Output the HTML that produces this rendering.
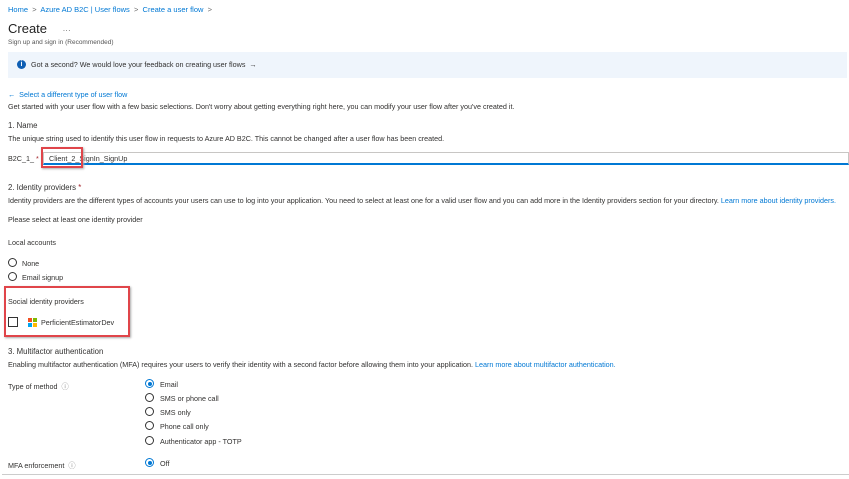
<!DOCTYPE html><html><head><style>
body{margin:0;width:849px;height:479px;overflow:hidden;background:#fff;font-family:"Liberation Sans",sans-serif;color:#323130;position:relative}
.t{position:absolute;font-size:7.2px;white-space:nowrap;line-height:9px}
.l{color:#0078d4}
.r{position:absolute;width:9px;height:9px;border:1px solid #333;border-radius:50%;box-sizing:border-box}
.rs{border-color:#0078d4}.rs:after{content:"";position:absolute;left:1.5px;top:1.5px;width:4px;height:4px;border-radius:50%;background:#0078d4}
.box{position:absolute;border:2px solid #e0454a;box-sizing:border-box;box-shadow:1px 1px 2px #aaa}
</style></head><body>
<div class="t l" style="left:8px;top:5px;font-size:7.5px">Home &nbsp;<span style="color:#666">&gt;</span>&nbsp; Azure AD B2C | User flows &nbsp;<span style="color:#666">&gt;</span>&nbsp; Create a user flow &nbsp;<span style="color:#666">&gt;</span></div>
<div class="t" style="left:8px;top:21px;font-size:13px;line-height:15px;color:#222">Create <span style="font-size:8px;color:#666;margin-left:12px">···</span></div>
<div class="t" style="left:8px;top:38px;font-size:6.5px;color:#555">Sign up and sign in (Recommended)</div>
<div style="position:absolute;left:8px;top:52px;width:839px;height:26px;background:#eff5fc"></div>
<div style="position:absolute;left:17px;top:60px;width:9px;height:9px;border-radius:50%;background:#0f5fb4;color:#fff;font-size:7px;line-height:9px;text-align:center;font-weight:bold">i</div>
<div class="t" style="left:31px;top:60px">Got a second? We would love your feedback on creating user flows &nbsp;→</div>
<div class="t l" style="left:8px;top:90px">← &nbsp;Select a different type of user flow</div>
<div class="t" style="left:8px;top:102px">Get started with your user flow with a few basic selections. Don't worry about getting everything right here, you can modify your user flow after you've created it.</div>
<div class="t" style="left:8px;top:121px;font-size:7.8px">1. Name</div>
<div class="t" style="left:8px;top:134px">The unique string used to identify this user flow in requests to Azure AD B2C. This cannot be changed after a user flow has been created.</div>
<div class="t" style="left:8px;top:154px">B2C_1_ <span style="color:#a4262c">*</span></div>
<div style="position:absolute;left:43px;top:152px;width:806px;height:13px;border:1px solid #c8c6c4;border-bottom:2px solid #0078d4;box-sizing:border-box"></div>
<div class="t" style="left:49px;top:154px">Client_2_SignIn_SignUp</div>
<div class="box" style="left:41px;top:147px;width:42px;height:21px"></div>
<div class="t" style="left:8px;top:183px;font-size:7.8px">2. Identity providers <span style="color:#a4262c">*</span></div>
<div class="t" style="left:8px;top:196px">Identity providers are the different types of accounts your users can use to log into your application. You need to select at least one for a valid user flow and you can add more in the Identity providers section for your directory. <span class="l">Learn more about identity providers.</span></div>
<div class="t" style="left:8px;top:215px">Please select at least one identity provider</div>
<div class="t" style="left:8px;top:238px">Local accounts</div>
<div class="r" style="left:8px;top:258px"></div><div class="t" style="left:22px;top:259px">None</div>
<div class="r" style="left:8px;top:272px"></div><div class="t" style="left:22px;top:273px">Email signup</div>
<div class="box" style="left:4px;top:286px;width:126px;height:51px"></div>
<div class="t" style="left:8px;top:297px">Social identity providers</div>
<div style="position:absolute;left:8px;top:317px;width:10px;height:10px;border:1px solid #333;box-sizing:border-box"></div>
<div style="position:absolute;left:28px;top:318px;width:9px;height:9px">
<div style="position:absolute;left:0;top:0;width:4px;height:4px;background:#f25022"></div><div style="position:absolute;left:5px;top:0;width:4px;height:4px;background:#7fba00"></div><div style="position:absolute;left:0;top:5px;width:4px;height:4px;background:#00a4ef"></div><div style="position:absolute;left:5px;top:5px;width:4px;height:4px;background:#ffb900"></div></div>
<div class="t" style="left:41px;top:318px">PerficientEstimatorDev</div>
<div class="t" style="left:8px;top:347px;font-size:7.8px">3. Multifactor authentication</div>
<div class="t" style="left:8px;top:360px">Enabling multifactor authentication (MFA) requires your users to verify their identity with a second factor before allowing them into your application. <span class="l">Learn more about multifactor authentication.</span></div>
<div class="t" style="left:8px;top:382px">Type of method &nbsp;<span style="color:#888">ⓘ</span></div>
<div class="r rs" style="left:145px;top:379px"></div><div class="t" style="left:160px;top:380px">Email</div>
<div class="r" style="left:145px;top:393px"></div><div class="t" style="left:160px;top:394px">SMS or phone call</div>
<div class="r" style="left:145px;top:407px"></div><div class="t" style="left:160px;top:408px">SMS only</div>
<div class="r" style="left:145px;top:421px"></div><div class="t" style="left:160px;top:422px">Phone call only</div>
<div class="r" style="left:145px;top:436px"></div><div class="t" style="left:160px;top:437px">Authenticator app - TOTP</div>
<div class="t" style="left:8px;top:461px">MFA enforcement &nbsp;<span style="color:#888">ⓘ</span></div>
<div class="r rs" style="left:145px;top:458px"></div><div class="t" style="left:160px;top:459px">Off</div>
<div style="position:absolute;left:2px;top:474px;width:847px;height:1px;background:#ccc"></div>
</body></html>
